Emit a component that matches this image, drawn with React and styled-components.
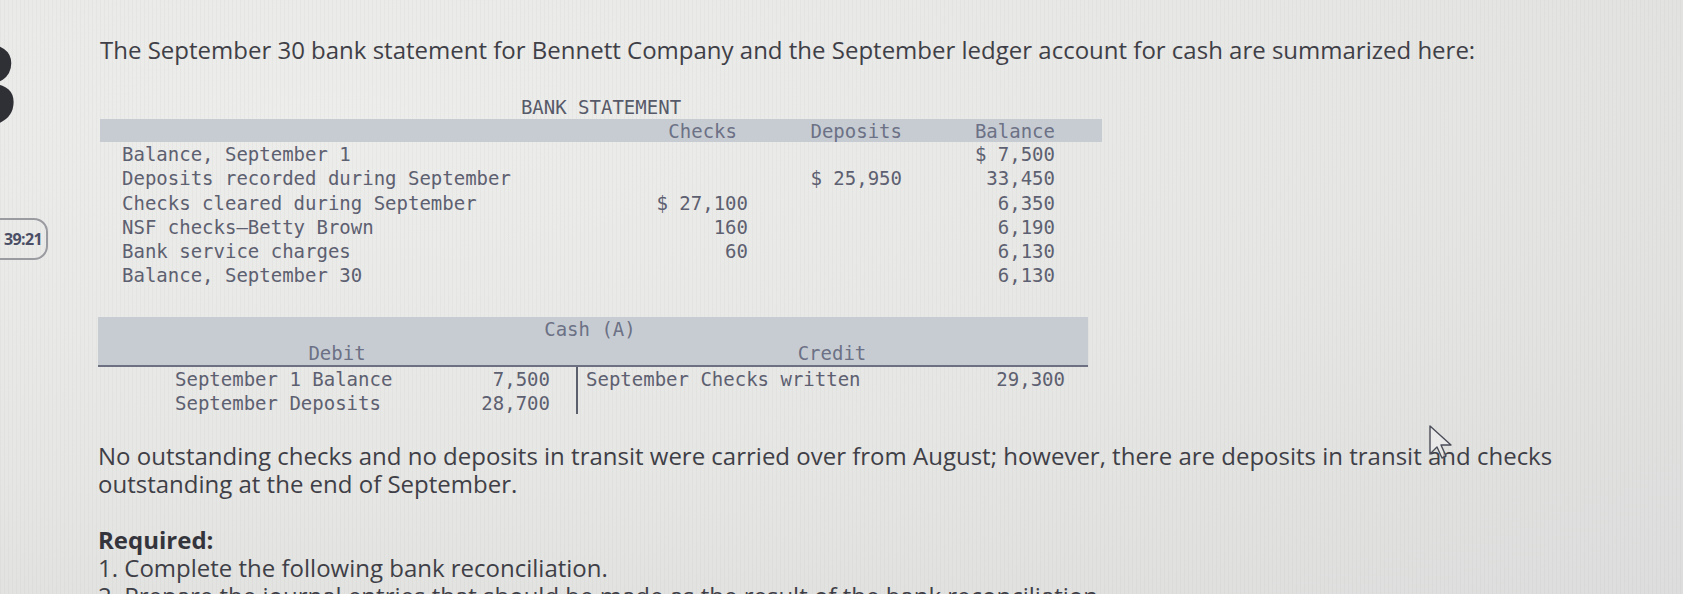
import React from 'react';
import styled, { createGlobalStyle } from 'styled-components';

const GlobalStyle = createGlobalStyle`
    html, body {
        margin: 0;
        padding: 0;
        height: 100%;
    }
    body {
        background-color: #e7e7e5;
        background-image:
            repeating-linear-gradient(90deg, rgba(0, 0, 0, 0.025) 0 1px, transparent 1px 4px),
            radial-gradient(ellipse at 20% 20%, #ededeb 0%, #e6e6e4 55%, #dcdddc 100%);
        overflow: hidden;
    }
`;

const Page = styled.div`
    position: relative;
    display: flex;
    width: 1683px;
    height: 594px;
    overflow: hidden;
`;

const Gutter = styled.div`
    width: 98px;
    flex-shrink: 0;
    display: flex;
    flex-direction: column;
    align-items: flex-start;
`;

const BigDigit = styled.div`
    font-family: "Open Sans", sans-serif;
    font-size: 112px;
    line-height: 1;
    font-weight: 700;
    color: #2f2f36;
    margin-left: -46px;
    margin-top: 26px;
    height: 112px;
`;

const Timer = styled.div`
    margin-top: 80px;
    margin-left: -14px;
    padding: 0 4px 0 16px;
    height: 38px;
    display: flex;
    align-items: center;
    border: 2px solid #9a9ba0;
    border-radius: 14px;
    font-family: "Open Sans", sans-serif;
    font-size: 16px;
    font-weight: 700;
    color: #4a4f66;
    letter-spacing: -0.6px;
`;

const Main = styled.div`
    flex: 1;
    padding-top: 36px;
`;

const Prose = styled.p`
    margin: 0;
    padding-left: ${p => p.indent || 0}px;
    font-family: "Open Sans", sans-serif;
    font-size: 24px;
    line-height: 28px;
    color: #3f3f47;
    max-width: 1480px;
    letter-spacing: 0;
`;

const Strong = styled.span`
    font-weight: 700;
    color: #34343c;
`;

const Gap = styled.div`
    height: ${p => p.h}px;
`;

const Statement = styled.div`
    width: 1002px;
    margin-left: 2px;
    font-family: "DejaVu Sans Mono", "Liberation Mono", monospace;
    font-size: 19px;
    color: #5d6070;
`;

const Caption = styled.div`
    text-align: center;
    line-height: 24px;
    color: #575a68;
`;

const StatementRow = styled.div`
    display: grid;
    grid-template-columns: 478px 148px 154px 153px;
    padding-left: 22px;
    line-height: 24.3px;
    background: ${p => (p.head ? '#c7ccd3' : 'transparent')};
    height: ${p => (p.head ? '23px' : 'auto')};
    align-items: center;
`;

const Num = styled.span`
    text-align: right;
    white-space: pre;
    padding-right: ${p => p.pad || 0}px;
    color: ${p => (p.head ? '#6c7185' : 'inherit')};
`;

const Label = styled.span`
    white-space: pre;
`;

const Ledger = styled.div`
    width: 990px;
    margin-top: 29px;
    font-family: "DejaVu Sans Mono", "Liberation Mono", monospace;
    font-size: 19px;
    color: #5d6070;
`;

const LedgerHead = styled.div`
    background: #c7ccd3;
    border-bottom: 2px solid #6c7080;
    color: #6c7185;
`;

const LedgerTitle = styled.div`
    text-align: center;
    line-height: 24px;
    margin-right: 6px;
`;

const Sides = styled.div`
    display: grid;
    grid-template-columns: 478px 512px;
    line-height: 24px;
`;

const SideHead = styled.div`
    text-align: center;
`;

const Side = styled.div`
    display: flex;
    flex-direction: column;
    border-left: ${p => (p.credit ? '2px solid #5c5f6c' : 'none')};
    padding: ${p => (p.credit ? '0 23px 0 8px' : '0 26px 0 77px')};
    height: 47px;
`;

const Entry = styled.div`
    display: flex;
    justify-content: space-between;
    line-height: 24px;
    white-space: pre;
`;

const Cursor = styled.svg`
    position: absolute;
    left: 1428px;
    top: 424px;
`;

const bankRows = [
    ['Balance, September 1', '', '', '$ 7,500'],
    ['Deposits recorded during September', '', '$ 25,950', '33,450'],
    ['Checks cleared during September', '$ 27,100', '', '6,350'],
    ['NSF checks\u2014Betty Brown', '160', '', '6,190'],
    ['Bank service charges', '60', '', '6,130'],
    ['Balance, September 30', '', '', '6,130'],
];

export default function App() {
    return (
        <Page>
            <GlobalStyle />
            <Gutter>
                <BigDigit>3</BigDigit>
                <Timer>39:21</Timer>
            </Gutter>
            <Main>
                <Prose indent={2}>
                    The September 30 bank statement for Bennett Company and the September ledger account for cash are summarized here:
                </Prose>
                <Gap h={31} />
                <Statement>
                    <Caption>BANK STATEMENT</Caption>
                    <StatementRow head>
                        <Label></Label>
                        <Num head pad={11}>Checks</Num>
                        <Num head>Deposits</Num>
                        <Num head>Balance</Num>
                    </StatementRow>
                    {bankRows.map(r => (
                        <StatementRow key={r[0]}>
                            <Label>{r[0]}</Label>
                            <Num>{r[1]}</Num>
                            <Num>{r[2]}</Num>
                            <Num>{r[3]}</Num>
                        </StatementRow>
                    ))}
                </Statement>
                <Ledger>
                    <LedgerHead>
                        <LedgerTitle>Cash (A)</LedgerTitle>
                        <Sides>
                            <SideHead>Debit</SideHead>
                            <SideHead>Credit</SideHead>
                        </Sides>
                    </LedgerHead>
                    <Sides>
                        <Side>
                            <Entry><span>September 1 Balance</span><span>7,500</span></Entry>
                            <Entry><span>September Deposits</span><span>28,700</span></Entry>
                        </Side>
                        <Side credit>
                            <Entry><span>September Checks written</span><span>29,300</span></Entry>
                        </Side>
                    </Sides>
                </Ledger>
                <Gap h={28} />
                <Prose>
                    No outstanding checks and no deposits in transit were carried over from August; however, there are deposits in transit and checks outstanding at the end of September.
                </Prose>
                <Gap h={28} />
                <Prose><Strong>Required:</Strong></Prose>
                <Prose>1. Complete the following bank reconciliation.</Prose>
                <Prose>2. Prepare the journal entries that should be made as the result of the bank reconciliation.</Prose>
            </Main>
            <Cursor width="26" height="36" viewBox="0 0 26 36">
                <path d="M2 2 L2 30 L9 23 L14 34 L18 32 L13 21 L23 21 Z" fill="rgba(240,240,240,0.6)" stroke="#4a4c58" strokeWidth="1.4" strokeLinejoin="round" />
            </Cursor>
        </Page>
    );
}
